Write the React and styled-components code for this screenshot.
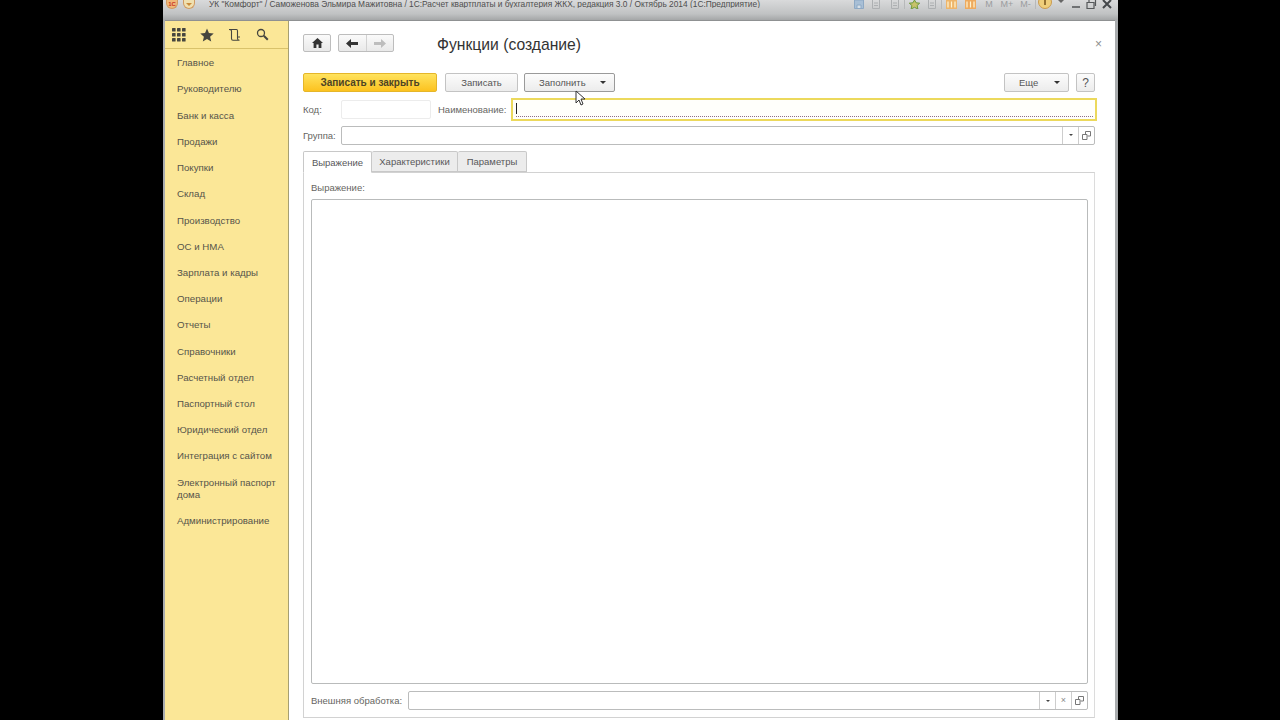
import React from "react";
import styled, { createGlobalStyle } from "styled-components";

const Global = createGlobalStyle`
  html, body { margin: 0; padding: 0; background: #000; }
  #root { width: 1280px; height: 720px; overflow: hidden; }
  * { box-sizing: border-box; }
`;

const Screen = styled.div`
  width: 1280px; height: 720px; background: #000;
  display: flex; justify-content: flex-start; padding-left: 163px;
  font-family: "Liberation Sans", Arial, sans-serif; color: #4a4a46; font-size: 9.5px;
`;
const Win = styled.div`
  width: 955px; height: 720px; display: flex; flex-direction: column;
  background: #a9acae; padding: 0 3px 0 2px;
`;
const TitleBar = styled.div`
  height: 20px; flex: none; display: flex; align-items: flex-start; position: relative;
  background: linear-gradient(#d9dadb, #c0c2c3 70%, #a5a7a8);
  margin: 0 -3px 0 -2px; padding: 0 3px 0 3px;
`;
const TitleLogos = styled.div`display: flex; gap: 5px; width: 43px; flex: none;`;
const Orb = styled.span`
  width: 12px; height: 9px; border-radius: 0 0 6px 6px; display: flex; align-items: center; justify-content: center;
  background: ${p => p.$c}; border: 1px solid #d09a62; border-top: 0; overflow: hidden;
  font-size: 6px; font-weight: 700; line-height: 8px; color: #c8321e;
`;
const TitleText = styled.div`
  font-size: 8.35px; line-height: 8px; color: #4e4e4e; white-space: nowrap; flex: 1; min-width: 0; overflow: hidden;
`;
const TitleTools = styled.div`display: flex; align-items: flex-start; flex: none; height: 9px;`;
const Tool = styled.span`
  width: ${p => p.$w}px; height: 9px; flex: none; display: flex; justify-content: center; align-items: flex-start; overflow: hidden;
  font-size: 9px; line-height: 8px; color: #9a9c9e; border-left: ${p => p.$sep ? "1px solid #b7b9ba" : "0"};
`;
const Body = styled.div`flex: 1; min-height: 0; display: flex; background: #fff; border-top: 1px solid #8f9192;`;
const Side = styled.aside`
  width: 124px; flex: none; background: #fbe797; border-right: 1px solid #a69f72; display: flex; flex-direction: column;
`;
const SideTop = styled.div`
  height: 28px; flex: none; border-bottom: 1px solid #d9c26b; display: flex; align-items: center; padding: 0 0 0 7px;
`;
const SideIcon = styled.span`width: 28px; height: 20px; display: flex; align-items: center; color: #444;`;
const Nav = styled.nav`display: flex; flex-direction: column; padding: 8.2px 6px 0 12px; gap: 14.22px;`;
const NavItem = styled.div`font-size: 9.7px; line-height: 12px; color: #56544a;`;
const Main = styled.main`flex: 1; min-width: 0; padding: 0 20px 0 14px; display: flex; flex-direction: column; position: relative;`;
const HeadRow = styled.div`height: 34px; margin-top: 13px; display: flex; align-items: flex-start; flex: none;`;
const NavBtn = styled.div`
  height: 18px; width: ${p => p.$w}px; margin-right: ${p => p.$mr || 0}px; display: flex; align-items: center; justify-content: center;
  border: 1px solid #bdbdbd; border-radius: 2px; background: linear-gradient(#fafafa, #e9e9e9); flex: none;
`;
const Half = styled.span`flex: 1; height: 100%; display: flex; align-items: center; justify-content: center; border-left: ${p => p.$sep ? "1px solid #d2d2d2" : "0"};`;
const Title = styled.h1`margin: 2px 0 0 43px; font-weight: 400; font-size: 15.7px; line-height: 18px; color: #333;`;
const Close = styled.span`position: absolute; right: 13px; top: 16px; color: #8d8d8d; font-size: 12px; line-height: 14px;`;
const Toolbar = styled.div`display: flex; align-items: flex-start; height: 23px; margin-top: 5px; flex: none;`;
const Btn = styled.div`
  height: 19px; width: ${p => p.$w}px; margin-left: ${p => p.$ml || 0}px; flex: none; border-radius: 2px; display: flex; align-items: center;
  justify-content: ${p => p.$between ? "space-between" : "center"}; padding: ${p => p.$between ? "0 8px 0 14px" : "0"};
  border: 1px solid ${p => p.$strong ? "#9a9a9a" : "#c3c3c3"};
  background: linear-gradient(#fcfcfc, #ececec); font-size: ${p => p.$fs || 9.5}px; color: #555;
`;
const Primary = styled(Btn)`
  border-color: #e5b62a; background: linear-gradient(#ffe35e, #fcc21f); font-weight: 700; color: #4d4425; font-size: 10px;
`;
const Spacer = styled.div`flex: 1;`;
const Row = styled.div`display: flex; align-items: center; height: 26px; flex: none;`;
const Label = styled.span`width: ${p => p.$w}px; padding-left: ${p => p.$pl || 0}px; flex: none; font-size: 9.5px; color: #66665f; white-space: nowrap;`;
const Plain = styled.div`width: 90px; height: 19px; border: 1px solid #ececec; border-radius: 2px; flex: none;`;
const Focused = styled.div`
  width: 586px; height: 23px; border: 2px solid #ecd95c; flex: none; padding: 3px 2px 2px 3px; margin-right: -2px; background: #fffffb;
  position: relative; display: flex; align-items: flex-start;
  &::after { content: ""; position: absolute; left: 3px; right: 2px; bottom: 2px; border-bottom: 1px dotted #8d6f86; }
`;
const Caret = styled.span`width: 1px; height: 11px; background: #222;`;
const Field = styled.div`
  flex: 1; min-width: 0; height: 19px; border: 1px solid #bbbcbc; border-radius: 2px; display: flex; justify-content: flex-end; background: #fff;
`;
const FieldBtn = styled.span`
  width: 16px; height: 100%; flex: none; border-left: 1px solid #cdcdcd; display: flex; align-items: center; justify-content: center; color: #8a8a8a; font-size: 9px; line-height: 1;
`;
const Tabs = styled.div`display: flex; align-items: flex-end; height: 21px; margin-top: 3px; flex: none; position: relative; z-index: 1;`;
const Tab = styled.div`
  height: ${p => p.$active ? 22 : 21}px; width: ${p => p.$w}px; margin-bottom: ${p => p.$active ? -1 : 0}px; flex: none; display: flex; align-items: center; justify-content: center; font-size: 9.5px; color: #58585a;
  background: ${p => p.$active ? "#fff" : "#ececec"}; border: 1px solid #c8c8c8; border-left-width: ${p => p.$first ? 1 : 0}px; border-bottom-color: ${p => p.$active ? "#fff" : "#c8c8c8"}; border-radius: 2px 2px 0 0;
`;
const Panel = styled.section`
  flex: 1; min-height: 0; margin-bottom: 2px; border: 1px solid #d2d2d2; border-right-color: #dcdcdc; padding: 0 6px 0 7px; display: flex; flex-direction: column;
`;
const PanelLabel = styled.div`font-size: 9.5px; line-height: 13px; color: #66665f; margin-top: 8px; height: 18px; flex: none;`;
const Editor = styled.div`flex: 1; min-height: 0; border: 1px solid #b9bbbb; border-radius: 2px; background: #fff;`;
const Foot = styled.div`display: flex; align-items: center; height: 33px; flex: none;`;
const Cursor = styled.svg`position: absolute; left: 286px; top: 69px; z-index: 3;`;

const Grid = () => <svg width="14" height="14" viewBox="0 0 14 14" fill="#46463f">{[0,5,10].flatMap(y => [0,5,10].map(x => <rect key={x+"-"+y} x={x} y={y} width="3.6" height="3.6" rx=".6" />))}</svg>;
const Star = () => <svg width="14" height="14" viewBox="0 0 24 24" fill="#46463f"><path d="M12 1l3.3 7.6 8.2.8-6.2 5.5 1.9 8.1L12 18.8 4.800 23l1.900-8.100L.5 9.400l8.200-.8z" /></svg>;
const Scroll = () => <svg width="13" height="13" viewBox="0 0 13 13" fill="none" stroke="#46463f" strokeWidth="1.1"><path d="M1 1.500h7.500c.8 0 1 .7 1 1.500v7.500c0 1 .6 1.800 2 1.800H5c-1 0-1.500-.8-1.500-1.800V3C3.500 2 3 1.500 1 1.500zM9.500 9H12" /></svg>;
const Search = () => <svg width="13" height="13" viewBox="0 0 13 13" fill="none" stroke="#46463f"><circle cx="5" cy="5" r="3.500" strokeWidth="1.300" /><path d="M7.800 7.800l4 4" strokeWidth="2" /></svg>;
const Home = () => <svg width="11" height="10" viewBox="0 0 11 10" fill="#333"><path d="M5.500 0L11 5H9.400v5H6.600V6.500H4.400V10H1.600V5H0z" /></svg>;
const Arrow = ({ dir, c }) => <svg width="12" height="9" viewBox="0 0 12 9" fill={c} style={{ transform: dir === "r" ? "scaleX(-1)" : "none" }}><path d="M0 4.500L5 0v3h7v3H5v3z" /></svg>;
const Drop = ({ c = "#333", w = 6 }) => <svg width={w} height={w / 2} viewBox="0 0 6 3" fill={c}><path d="M0 0h6L3 3z" /></svg>;
const Open = () => <svg width="9" height="9" viewBox="0 0 9 9" fill="none" stroke="#777"><path d="M3.500 3V.5h5v4.500H5.500M.5 3.500h4.500v5H.5z" /></svg>;

const Doc = ({ c = "#adb0b2" }) => <svg width="10" height="9" viewBox="0 0 10 9" fill="none" stroke={c}><path d="M1.500 0v8.500h7V0" /><path d="M3 3h4M3 5.500h4" /></svg>;
const Save = () => <svg width="10" height="9" viewBox="0 0 10 9" fill="#a8bfd6" stroke="#8ea9c4"><path d="M.5 0v8.500h9V0z" /><path d="M3 5h4v3.500H3z" fill="#d7e0e8" /></svg>;
const GStar = () => <svg width="13" height="10" viewBox="0 0 13 10"><path d="M6.500 0l1.600 2.800 3.600.4-2.600 2.300.8 3.500-3.400-1.700L3.100 9l.8-3.500-2.600-2.300 3.600-.4z" fill="#c8c26a" stroke="#6d9a3a" /></svg>;
const Cal = ({ c }) => <svg width="11" height="9" viewBox="0 0 11 9"><path d="M0 0h11v9H0z" fill={c} /><path d="M2 1.500v6M5.500 1.500v6M9 1.500v6" stroke="#fff3d0" strokeWidth="1.200" /></svg>;
const Info = () => <svg width="14" height="9" viewBox="0 0 14 9"><circle cx="7" cy="2" r="6.500" fill="#efce7a" stroke="#c99a4f" /><path d="M7 0v5" stroke="#7d5a20" strokeWidth="1.600" /></svg>;
const Min = () => <svg width="8" height="9" viewBox="0 0 8 9"><path d="M0 6h8v2H0z" fill="#6f7173" /></svg>;
const Restore = () => <svg width="11" height="9" viewBox="0 0 11 9" fill="none" stroke="#55585a" strokeWidth="1.200"><path d="M1 2.500h7v6H1zM3 2.500V0M9.500 0v6" /></svg>;
const Cross = () => <svg width="10" height="9" viewBox="0 0 10 9" fill="none" stroke="#44484b" strokeWidth="2"><path d="M1 0l8 8M9 0L1 8" /></svg>;

const items = ["Главное","Руководителю","Банк и касса","Продажи","Покупки","Склад","Производство","ОС и НМА","Зарплата и кадры","Операции","Отчеты","Справочники","Расчетный отдел","Паспортный стол","Юридический отдел","Интеграция с сайтом","Электронный паспорт дома","Администрирование"];

export default function App() {
  return (
    <Screen>
      <Global />
      <Win>
        <TitleBar>
          <TitleLogos><Orb $c="#f0b878">1С</Orb><Orb $c="#efe0b0"><Drop c="#c98a3a" /></Orb></TitleLogos>
          <TitleText>УК "Комфорт" / Саможенова Эльмира Мажитовна / 1С:Расчет квартплаты и бухгалтерия ЖКХ, редакция 3.0 / Октябрь 2014  (1С:Предприятие)</TitleText>
          <TitleTools>
            <Tool $w={16}><Save /></Tool>
            <Tool $w={18}><Doc /></Tool>
            <Tool $w={19}><Doc /></Tool>
            <Tool $w={19} $sep><GStar /></Tool>
            <Tool $w={18}><Doc /></Tool>
            <Tool $w={20} $sep><Cal c="#eeb56a" /></Tool>
            <Tool $w={19}><Cal c="#eeaa5e" /></Tool>
            <Tool $w={18}>M</Tool>
            <Tool $w={18}>M+</Tool>
            <Tool $w={19}>M-</Tool>
            <Tool $w={18} $sep><Info /></Tool>
            <Tool $w={15}><Drop c="#666" /></Tool>
            <Tool $w={16}><Min /></Tool>
            <Tool $w={15}><Restore /></Tool>
            <Tool $w={16}><Cross /></Tool>
          </TitleTools>
        </TitleBar>
        <Body>
          <Side>
            <SideTop>
              <SideIcon><Grid /></SideIcon>
              <SideIcon><Star /></SideIcon>
              <SideIcon><Scroll /></SideIcon>
              <SideIcon><Search /></SideIcon>
            </SideTop>
            <Nav>{items.map(i => <NavItem key={i}>{i}</NavItem>)}</Nav>
          </Side>
          <Main>
            <HeadRow>
              <NavBtn $w={28} $mr={7}><Home /></NavBtn>
              <NavBtn $w={56}><Half><Arrow c="#333" /></Half><Half $sep><Arrow dir="r" c="#bdbdbd" /></Half></NavBtn>
              <Title>Функции (создание)</Title>
            </HeadRow>
            <Close>×</Close>
            <Toolbar>
              <Primary $w={134}>Записать и закрыть</Primary>
              <Btn $w={73} $ml={8}>Записать</Btn>
              <Btn $w={91} $ml={6} $strong $between>Заполнить <Drop /></Btn>
              <Spacer />
              <Btn $w={65} $between>Еще <Drop /></Btn>
              <Btn $w={19} $ml={7} $fs={12}>?</Btn>
            </Toolbar>
            <Row>
              <Label $w={38}>Код:</Label>
              <Plain />
              <Label $w={80} $pl={7}>Наименование:</Label>
              <Focused><Caret /></Focused>
            </Row>
            <Row>
              <Label $w={38}>Группа:</Label>
              <Field><FieldBtn><Drop c="#444" w={4} /></FieldBtn><FieldBtn><Open /></FieldBtn></Field>
            </Row>
            <Tabs>
              <Tab $active $first $w={69}>Выражение</Tab>
              <Tab $w={86}>Характеристики</Tab>
              <Tab $w={69}>Параметры</Tab>
            </Tabs>
            <Panel>
              <PanelLabel>Выражение:</PanelLabel>
              <Editor />
              <Foot>
                <Label $w={97}>Внешняя обработка:</Label>
                <Field><FieldBtn><Drop c="#444" w={4} /></FieldBtn><FieldBtn>×</FieldBtn><FieldBtn><Open /></FieldBtn></Field>
              </Foot>
            </Panel>
            <Cursor width="12" height="17" viewBox="0 0 12 17"><path d="M1 1v12l3-3 2 5 2-1-2-5h4z" fill="#fff" stroke="#333" /></Cursor>
          </Main>
        </Body>
      </Win>
    </Screen>
  );
}
